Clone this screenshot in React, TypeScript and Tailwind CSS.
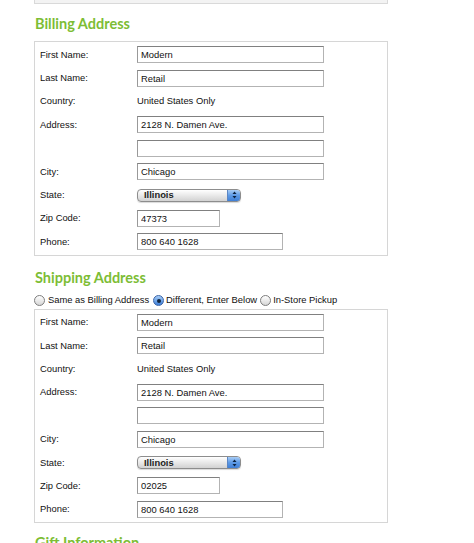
import React from "react";

const font = { fontFamily: '"Liberation Sans", Arial, sans-serif' };
const headFont = { fontFamily: 'Lato, "Open Sans", sans-serif' };

const TextBox = ({ value, w = "w-[187px]" }: { value: string; w?: string }) => (
  <input
    readOnly
    value={value}
    className={`${w} h-[17px] border border-[#b3b3b3] border-t-[#808080] border-l-[#999] bg-white px-[3px] text-[9.4px] text-[#111] outline-none`}
    style={font}
  />
);

const StateSelect = () => (
  <div className="flex h-[13px] w-[104px] items-stretch overflow-hidden rounded-[4px] border border-[#8d8d8d] bg-gradient-to-b from-[#ffffff] via-[#e9e9e9] to-[#d2d2d2] shadow-[0_1px_1px_rgba(0,0,0,0.15)]">
    <div className="flex flex-1 items-center pl-[6px] text-[9.4px] font-bold text-[#222]" style={font}>
      Illinois
    </div>
    <div className="flex w-[13px] items-center justify-center border-l border-[#5b86c4] bg-gradient-to-b from-[#a9cdf5] via-[#5d9ae6] to-[#3f7fd6]">
      <svg width="5" height="8" viewBox="0 0 5 8">
        <path d="M2.5 0.5 L4.5 3 L0.5 3 Z" fill="#0c2240" />
        <path d="M2.5 7.5 L4.5 5 L0.5 5 Z" fill="#0c2240" />
      </svg>
    </div>
  </div>
);

const Radio = ({ checked }: { checked?: boolean }) =>
  checked ? (
    <span className="flex h-[11px] w-[11px] items-center justify-center rounded-full border border-[#3b64a8] bg-gradient-to-b from-[#a7cdf6] to-[#3d7fd8]">
      <span className="h-[4px] w-[4px] rounded-full bg-[#10243f]" />
    </span>
  ) : (
    <span className="h-[11px] w-[11px] rounded-full border border-[#7d7d7d] bg-gradient-to-b from-[#ffffff] to-[#d6d6d6]" />
  );

const Row = ({ label, children }: { label: string; children?: React.ReactNode }) => (
  <div className="flex h-[23.4px] items-center">
    <div className="w-[97px] shrink-0 text-[9.4px] text-[#111]" style={font}>
      {label}
    </div>
    {children}
  </div>
);

const AddressBox = ({ zip }: { zip: string }) => (
  <div className="w-[354px] border border-[#d6d6d6] bg-white py-[1px] pl-[5px]">
    <Row label="First Name:">
      <TextBox value="Modern" />
    </Row>
    <Row label="Last Name:">
      <TextBox value="Retail" />
    </Row>
    <Row label="Country:">
      <span className="text-[9.4px] text-[#111]" style={font}>
        United States Only
      </span>
    </Row>
    <Row label="Address:">
      <TextBox value="2128 N. Damen Ave." />
    </Row>
    <Row label="">
      <TextBox value="" />
    </Row>
    <Row label="City:">
      <TextBox value="Chicago" />
    </Row>
    <Row label="State:">
      <StateSelect />
    </Row>
    <Row label="Zip Code:">
      <TextBox value={zip} w="w-[83px]" />
    </Row>
    <Row label="Phone:">
      <TextBox value="800 640 1628" w="w-[146px]" />
    </Row>
  </div>
);

const Heading = ({ children, className = "" }: { children: React.ReactNode; className?: string }) => (
  <h2 className={`ml-[1px] h-[18px] text-[14.5px] leading-[18px] font-bold text-[#7dbd35] ${className}`} style={headFont}>
    {children}
  </h2>
);

export default function App() {
  return (
    <div className="h-[543px] w-[474px] overflow-hidden bg-white pl-[34px]">
      <div className="h-[4px] w-[354px] border border-t-0 border-[#d9d9d9] bg-[#f3f3f3]" />
      <Heading className="mt-[11px] mb-[8px]">Billing Address</Heading>
      <AddressBox zip="47373" />
      <Heading className="mt-[13px]">Shipping Address</Heading>
      <div className="mt-[7px] flex h-[14px] items-center text-[9.4px] text-[#111]" style={font}>
        <Radio />
        <span className="ml-[3px] mr-[4px]">Same as Billing Address</span>
        <Radio checked />
        <span className="ml-[2px] mr-[3px]">Different, Enter Below</span>
        <Radio />
        <span className="ml-[2px]">In-Store Pickup</span>
      </div>
      <div className="mt-[1px]">
        <AddressBox zip="02025" />
      </div>
      <Heading className="mt-[11px]">Gift Information</Heading>
    </div>
  );
}
